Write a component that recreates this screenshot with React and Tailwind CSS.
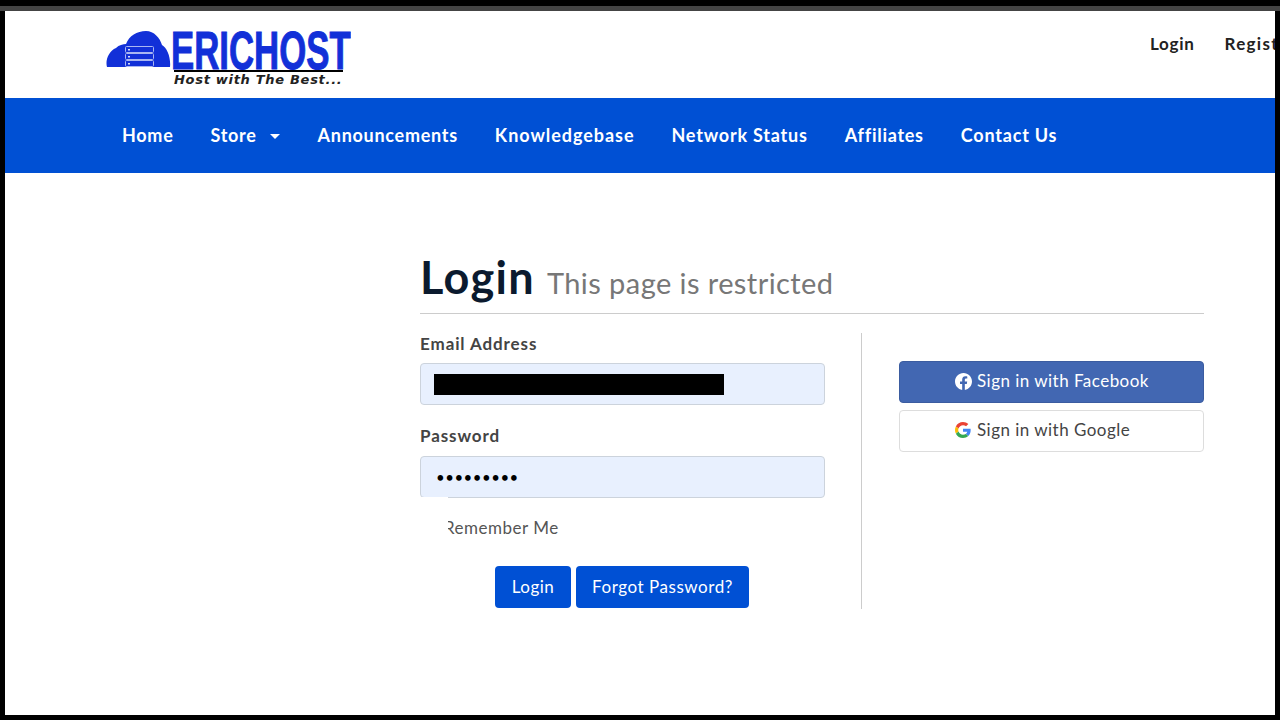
import React from 'react';

const navFont = { fontFamily: '"Lato", "Noto Sans", sans-serif' };

function Logo() {
    return (
        <div className="relative w-[250px] h-[60px]">
            <svg className="absolute left-0 top-[1px]" width="66" height="38" viewBox="0 0 66 38">
                <path
                    d="M1 37 C-1 30 3 21 10 18 C13 15 17 14 20 14 C23 6 31 1 40 1 C48 1 54 8 56 15 C61 18 65 27 64 37 Z"
                    fill="#1230d8"
                />
                <g fill="none" stroke="#a9b6f2" strokeWidth="1">
                    <rect x="19.500" y="16.500" width="28" height="6" rx="1" />
                    <rect x="19.500" y="23.500" width="28" height="6" rx="1" />
                    <rect x="19.500" y="30.500" width="28" height="6" rx="1" />
                </g>
                <g fill="#d5dbfa">
                    <rect x="22" y="19" width="2" height="1.500" />
                    <rect x="22" y="26" width="2" height="1.500" />
                    <rect x="22" y="33" width="2" height="1.500" />
                </g>
            </svg>
            <span className="absolute left-[65px] top-[-8px] origin-left scale-x-[0.656] whitespace-nowrap text-[53px] leading-[60px] font-bold text-[#1230d8] font-['Liberation_Sans',sans-serif] [-webkit-text-stroke:1px_#1230d8]">
                ERICHOST
            </span>
            <div className="absolute left-[68px] top-[41px] w-[169px] h-[2px] bg-black" />
            <span className="absolute left-[68px] top-[43px] whitespace-nowrap text-[13px] leading-[15px] font-bold italic tracking-[0.7px] text-[#222] font-['DejaVu_Sans',sans-serif]">
                Host with The Best...
            </span>
        </div>
    );
}

function GoogleIcon() {
    return (
        <svg width="16" height="16" viewBox="0 0 48 48">
            <path fill="#EA4335" d="M24 9.5c3.5 0 6.7 1.2 9.2 3.6l6.9-6.9C35.9 2.4 30.5 0 24 0 14.6 0 6.5 5.4 2.6 13.2l8 6.2C12.5 13.6 17.800 9.500 24 9.500z" />
            <path fill="#4285F4" d="M47 24.500c0-1.600-.1-3.100-.4-4.500H24v9h12.900c-.6 3-2.200 5.500-4.800 7.200l7.700 6c4.500-4.200 7.200-10.300 7.200-17.700z" />
            <path fill="#FBBC05" d="M10.500 28.600c-.5-1.400-.8-3-.8-4.600s.3-3.200.8-4.600l-8-6.200C.9 16.400 0 20.100 0 24s.9 7.600 2.600 10.800l7.900-6.200z" />
            <path fill="#34A853" d="M24 48c6.500 0 11.900-2.100 15.900-5.800l-7.700-6c-2.100 1.400-4.900 2.300-8.200 2.300-6.200 0-11.500-4.200-13.400-9.800l-8 6.200C6.500 42.600 14.600 48 24 48z" />
        </svg>
    );
}

function FacebookIcon() {
    return (
        <svg width="17" height="17" viewBox="0 0 24 24" fill="#fff">
            <path d="M24 12.070C24 5.400 18.630 0 12 0S0 5.400 0 12.070c0 6.030 4.390 11.020 10.130 11.930v-8.440H7.080v-3.490h3.050V9.410c0-3.020 1.790-4.690 4.530-4.690 1.310 0 2.680.24 2.680.24v2.970h-1.510c-1.490 0-1.960.93-1.960 1.880v2.260h3.330l-.53 3.490h-2.800V24C19.610 23.090 24 18.100 24 12.070z" />
        </svg>
    );
}

export default function App() {
    return (
        <div className="w-[1280px] h-[720px] bg-black overflow-hidden flex flex-col pt-[6px] pb-[5px] px-[5px]" style={navFont}>
            <div className="h-[5px] bg-[#444] -mx-[5px] shrink-0" />
            <div className="flex-1 bg-white flex flex-col overflow-hidden">
                <header className="h-[87px] shrink-0 flex justify-between pl-[101px]">
                    <div className="pt-[18px]">
                        <Logo />
                    </div>
                    <div className="flex gap-[30px] pt-[23px] text-[17px] leading-5 font-bold tracking-[0.7px] text-[#222] whitespace-nowrap w-[125px] shrink-0 overflow-hidden">
                        <span>Login</span>
                        <span className="tracking-[1.300px]">Register</span>
                    </div>
                </header>

                <nav className="h-[75px] shrink-0 bg-[#0050d4] flex items-center gap-[37px] pl-[117px] text-white text-[18px] font-bold tracking-[0.72px] whitespace-nowrap">
                    <a>Home</a>
                    <a className="flex items-center gap-[13px]">
                        Store
                        <span className="w-0 h-0 mt-[2px] border-x-[5px] border-x-transparent border-t-[5px] border-t-white" />
                    </a>
                    <a className="ml-[1px]">Announcements</a>
                    <a className="tracking-[0.95px]">Knowledgebase</a>
                    <a className="tracking-[0.8px]">Network Status</a>
                    <a>Affiliates</a>
                    <a className="tracking-[0.8px]">Contact Us</a>
                </nav>

                <main className="ml-[415px] w-[784px] pt-[76px]">
                    <div className="flex items-baseline gap-[12px] border-b border-[#ccc] h-[65px]">
                        <h1 className="text-[45px] leading-[56px] font-bold tracking-[1.300px] text-[#0b1a2e]">Login</h1>
                        <span className="text-[29px] leading-[56px] tracking-[0.43px] text-[#777]">This page is restricted</span>
                    </div>

                    <div className="flex mt-[19px]">
                        <form className="w-[442px] h-[276px] border-r border-[#ccc] pr-[36px] relative tracking-[0.5px]">
                            <label className="block pt-[1px] text-[17px] leading-5 font-bold tracking-[0.9px] text-[#444]">Email Address</label>
                            <div className="mt-[9px] h-[42px] rounded bg-[#e8f0fe] border border-[#ccd3dc] flex items-center pl-[13px]">
                                <div className="w-[290px] h-[21px] bg-black" />
                            </div>
                            <label className="block mt-[21px] text-[17px] leading-5 font-bold tracking-[0.9px] text-[#444]">Password</label>
                            <input
                                type="password"
                                readOnly
                                value="123456789"
                                className="block w-full mt-[10px] h-[42px] rounded bg-[#e8f0fe] border border-[#ccd3dc] pl-[15px] text-[15px] tracking-[0.5px] text-black outline-none"
                            />
                            <div className="absolute left-0 top-[164px] w-[28px] h-[46px] bg-white" />
                            <div className="mt-[20px] pl-[24px] text-[17px] leading-5 text-[#555]">Remember Me</div>
                            <div className="flex justify-center gap-[5px] mt-[28px] pr-[1px]">
                                <button type="button" className="h-[42px] w-[76px] rounded bg-[#0050d4] text-white text-[17px] tracking-[0.5px]">Login</button>
                                <button type="button" className="h-[42px] w-[173px] rounded bg-[#0050d4] text-white text-[17px] tracking-[0.55px]">Forgot Password?</button>
                            </div>
                        </form>

                        <div className="ml-[37px] w-[305px] pt-[28px] flex flex-col gap-[7px] tracking-[0.47px]">
                            <button type="button" className="h-[42px] rounded bg-[#4267b2] border border-[#3b5ca0] text-white text-[17px] flex items-center pl-[55px] pb-[2px] gap-[5px]">
                                <FacebookIcon />
                                Sign in with Facebook
                            </button>
                            <button type="button" className="h-[42px] rounded bg-white border border-[#ddd] text-[#444] text-[17px] flex items-center pl-[55px] pb-[2px] gap-[6px]">
                                <GoogleIcon />
                                Sign in with Google
                            </button>
                        </div>
                    </div>
                </main>
            </div>
        </div>
    );
}
